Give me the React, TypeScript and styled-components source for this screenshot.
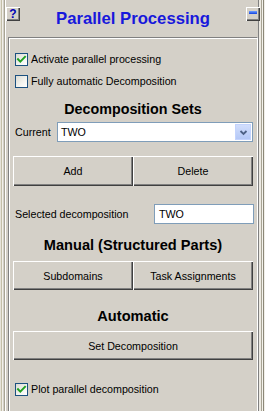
import React from "react";
import styled, { createGlobalStyle } from "styled-components";

const Global = createGlobalStyle`
  html, body { margin: 0; padding: 0; background: #d4d0c8; }
  body { font-family: "Liberation Sans", Arial, sans-serif; color: #000; }
  * { box-sizing: border-box; }
`;

const Frame = styled.div`
  width: 265px;
  height: 411px;
  overflow: hidden;
  background: #d4d0c8;
  padding: 0 7px 0 8px;
  display: flex;
  flex-direction: column;
  box-shadow:
    inset 1px 0 #e6e3da,
    inset 2px 0 #c4bfa8,
    inset 3px 0 #f2f0ea,
    inset 4px 0 #d4d0c8,
    inset 5px 0 #a8a494,
    inset 6px 0 #ffffff,
    inset -1px 0 #f0eee8,
    inset -2px 0 #8c8878,
    inset -3px 0 #f4f2ec,
    inset -4px 0 #a8a494,
    inset -6px 0 #ece9e2,
    inset -7px 0 #808080;
`;

const TitleBar = styled.div`
  height: 37px;
  margin: 0 -2px 0 -2px;
  padding-top: 7px;
  display: grid;
  grid-template-columns: 14px 1fr 14px;
  align-items: start;
`;

const TitleButton = styled.div`
  width: 14px;
  height: 14px;
  background: #d4d0c8;
  box-shadow: inset 1px 1px #ffffff, inset -1px -1px #404040, inset -2px -2px #808080;
  display: flex;
  align-items: center;
  justify-content: center;
  font-family: "Liberation Sans", Arial, sans-serif;
  font-weight: bold;
  font-size: 12px;
  line-height: 12px;
  color: #0000b4;
`;

const MinDash = styled.div`
  width: 8px;
  height: 3px;
  margin-top: -4px;
  background: linear-gradient(#6fa0ff, #1040e0);
`;

const TitleText = styled.div`
  margin-top: 2px;
  text-align: center;
  font-weight: bold;
  font-size: 16.7px;
  line-height: 20px;
  color: #1818dc;
  white-space: nowrap;
`;

const Panel = styled.div`
  flex: 1;
  border-top: 1px solid #808080;
  border-left: 1px solid #808080;
  border-right: 1px solid #ffffff;
  box-shadow: inset 1px 1px #ffffff;
  padding: 11px 4px 0 4px;
  display: flex;
  flex-direction: column;
`;

const CheckRow = styled.label<{ $mt?: number }>`
  display: flex;
  align-items: flex-start;
  height: 22px;
  padding: 4px 0 0 2px;
  margin-top: ${(p) => p.$mt ?? 0}px;
  font-size: 10.7px;
  line-height: 13px;
  white-space: nowrap;
`;

const Box = styled.span`
  width: 13px;
  height: 13px;
  flex: none;
  border: 1px solid #1c5180;
  background: linear-gradient(135deg, #dcdcd4 0%, #f4f4f0 60%, #ffffff 100%);
  display: flex;
  align-items: center;
  justify-content: center;
  margin-right: 3px;
`;

const Heading = styled.div<{ $mt: number; $size: number }>`
  margin-top: ${(p) => p.$mt}px;
  height: 16px;
  line-height: 16px;
  text-align: center;
  font-weight: bold;
  font-size: ${(p) => p.$size}px;
  white-space: nowrap;
`;

const FieldRow = styled.div<{ $mt: number; $pl: number }>`
  margin-top: ${(p) => p.$mt}px;
  padding-left: ${(p) => p.$pl}px;
  display: flex;
  align-items: center;
  height: 20px;
  font-size: 10.7px;
`;

const Label = styled.span`
  flex: 1;
  white-space: nowrap;
`;

const SelectBox = styled.div`
  width: 196px;
  height: 20px;
  border: 1px solid #7f9db9;
  background: #fff;
  display: flex;
  align-items: center;
  justify-content: space-between;
  padding: 1px 1px 1px 3px;
  font-size: 10.7px;
`;

const ArrowButton = styled.div`
  width: 16px;
  height: 100%;
  background: linear-gradient(#d2defc, #b4c8f6);
  border: 1px solid #c3d3fd;
  display: flex;
  align-items: center;
  justify-content: center;
`;

const TextInput = styled.div`
  width: 100px;
  height: 20px;
  margin-right: -1px;
  border: 1px solid #7f9db9;
  background: #fff;
  padding-left: 4px;
  display: flex;
  align-items: center;
  font-size: 10.7px;
`;

const ButtonGrid = styled.div<{ $mt: number; $cols: number; $h: number }>`
  margin-top: ${(p) => p.$mt}px;
  display: grid;
  grid-template-columns: repeat(${(p) => p.$cols}, 1fr);
  height: ${(p) => p.$h}px;
`;

const Button = styled.div`
  background: #d4d0c8;
  box-shadow: inset 1px 1px #ffffff, inset -1px -1px #404040, inset -2px -2px #808080;
  display: flex;
  align-items: center;
  justify-content: center;
  font-size: 10.7px;
  color: #000;
  white-space: nowrap;
`;

const Check = () => (
  <svg width="11" height="11" viewBox="0 0 11 11">
    <path d="M2 5.2 L4.3 7.6 L9 2.8" fill="none" stroke="#21a121" strokeWidth="2" strokeLinecap="square" />
  </svg>
);

const Chevron = () => (
  <svg width="9" height="7" viewBox="0 0 9 7">
    <path d="M1.5 2 L4.5 5 L7.5 2" fill="none" stroke="#4d6185" strokeWidth="1.8" />
  </svg>
);

export default function App() {
  return (
    <>
      <Global />
      <Frame>
        <TitleBar>
          <TitleButton>?</TitleButton>
          <TitleText>Parallel Processing</TitleText>
          <TitleButton>
            <MinDash />
          </TitleButton>
        </TitleBar>
        <Panel>
          <CheckRow>
            <Box>
              <Check />
            </Box>
            Activate parallel processing
          </CheckRow>
          <CheckRow>
            <Box />
            Fully automatic Decomposition
          </CheckRow>

          <Heading $mt={8} $size={14.3}>Decomposition Sets</Heading>
          <FieldRow $mt={5} $pl={2}>
            <Label>Current</Label>
            <SelectBox>
              <span>TWO</span>
              <ArrowButton>
                <Chevron />
              </ArrowButton>
            </SelectBox>
          </FieldRow>

          <ButtonGrid $mt={14} $cols={2} $h={30}>
            <Button>Add</Button>
            <Button>Delete</Button>
          </ButtonGrid>

          <FieldRow $mt={18} $pl={2}>
            <Label>Selected decomposition</Label>
            <TextInput>TWO</TextInput>
          </FieldRow>

          <Heading $mt={13} $size={14.6}>Manual (Structured Parts)</Heading>
          <ButtonGrid $mt={8} $cols={2} $h={29}>
            <Button>Subdomains</Button>
            <Button>Task Assignments</Button>
          </ButtonGrid>

          <Heading $mt={18} $size={14.6}>Automatic</Heading>
          <ButtonGrid $mt={7} $cols={1} $h={29}>
            <Button>Set Decomposition</Button>
          </ButtonGrid>

          <CheckRow $mt={19}>
            <Box>
              <Check />
            </Box>
            Plot parallel decomposition
          </CheckRow>
        </Panel>
      </Frame>
    </>
  );
}
